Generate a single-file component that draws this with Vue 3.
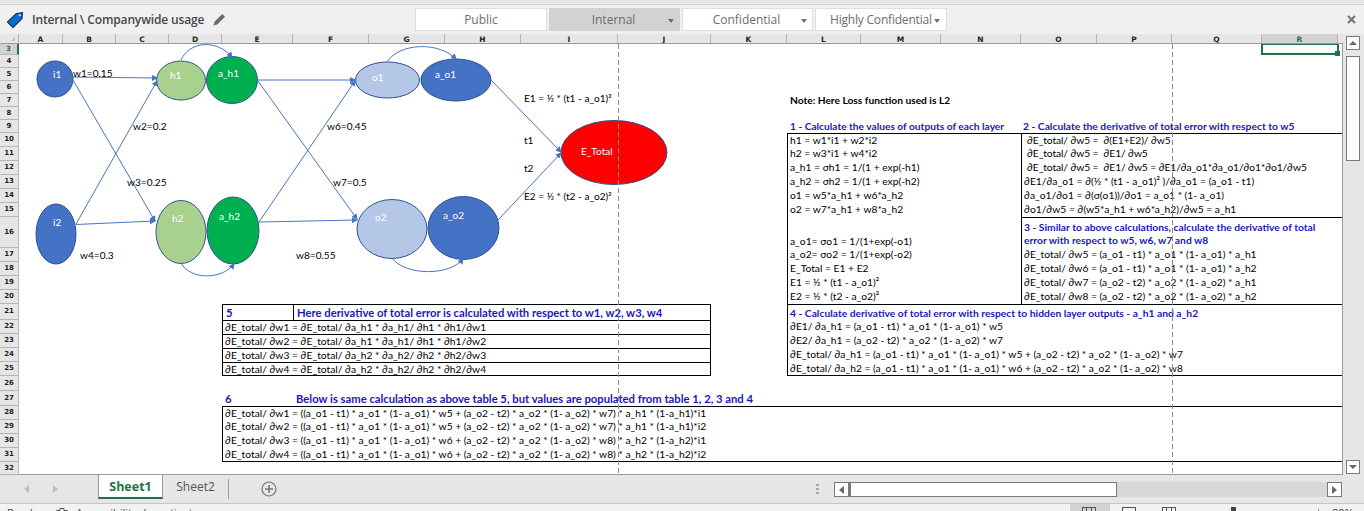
<script setup>
const colBounds = [19,63,116,169,222,293,369,445,521,618,711,787,861,941,1021,1097,1172,1262,1338,1342]
const colNames = 'ABCDEFGHIJKLMNOPQR'.split('')
const colWidths = colBounds.slice(1).map((b, i) => b - colBounds[i])
const rows = [
  [3,11],[4,13],[5,13],[6,13],[7,13],[8,13],[9,13],
  [10,14],[11,14],[12,14],[13,14],[14,14],[15,14],[16,31],[17,14],[18,14],[19,14],[20,14],
  [21,16],[22,14],[23,14],[24,14],[25,14],[26,15],[27,15],[28,14],[29,14],[30,14],[31,14],[32,13]
]
const sheetGrid = {
  gridTemplateColumns: colWidths.map(w => w + 'px').join(' '),
  gridTemplateRows: rows.map(r => r[1] + 'px').join(' ')
}
const colTemplate = { gridTemplateColumns: colWidths.map(w => w + 'px').join(' ') }

const t1a = ['h1 = w1*i1 + w2*i2','h2 = w3*i1 + w4*i2','a_h1 = σh1 = 1/(1 + exp(-h1)','a_h2 = σh2 = 1/(1 + exp(-h2)','o1 = w5*a_h1 + w6*a_h2','o2 = w7*a_h1 + w8*a_h2']
const t1b = ['a_o1= σo1 = 1/(1+exp(-o1)','a_o2= σo2 = 1/(1+exp(-o2)','E_Total = E1 + E2','E1 = ½ * (t1 - a_o1)²','E2 = ½ * (t2 - a_o2)²']
const t2a = ['∂E_total/ ∂w5 =  ∂(E1+E2)/ ∂w5','∂E_total/ ∂w5 =  ∂E1/ ∂w5','∂E_total/ ∂w5 =  ∂E1/ ∂w5 = ∂E1/∂a_o1*∂a_o1/∂o1*∂o1/∂w5']
const t2b = ['∂E1/∂a_o1 = ∂(½ * (t1 - a_o1)² )/∂a_o1 = (a_o1 - t1)','∂a_o1/∂o1 = ∂(σ(o1))/∂o1 = a_o1 * (1- a_o1)','∂o1/∂w5 = ∂(w5*a_h1 + w6*a_h2)/∂w5 = a_h1']
const t3 = ['∂E_total/ ∂w5 = (a_o1 - t1) * a_o1 * (1- a_o1) * a_h1','∂E_total/ ∂w6 = (a_o1 - t1) * a_o1 * (1- a_o1) * a_h2','∂E_total/ ∂w7 = (a_o2 - t2) * a_o2 * (1- a_o2) * a_h1','∂E_total/ ∂w8 = (a_o2 - t2) * a_o2 * (1- a_o2) * a_h2']
const t4 = ['∂E1/ ∂a_h1 = (a_o1 - t1) * a_o1 * (1- a_o1) * w5','∂E2/ ∂a_h1 = (a_o2 - t2) * a_o2 * (1- a_o2) * w7','∂E_total/ ∂a_h1 = (a_o1 - t1) * a_o1 * (1- a_o1) * w5 + (a_o2 - t2) * a_o2 * (1- a_o2) * w7','∂E_total/ ∂a_h2 = (a_o1 - t1) * a_o1 * (1- a_o1) * w6 + (a_o2 - t2) * a_o2 * (1- a_o2) * w8']
const t5 = ['∂E_total/ ∂w1 = ∂E_total/ ∂a_h1 * ∂a_h1/ ∂h1 * ∂h1/∂w1','∂E_total/ ∂w2 = ∂E_total/ ∂a_h1 * ∂a_h1/ ∂h1 * ∂h1/∂w2','∂E_total/ ∂w3 = ∂E_total/ ∂a_h2 * ∂a_h2/ ∂h2 * ∂h2/∂w3','∂E_total/ ∂w4 = ∂E_total/ ∂a_h2 * ∂a_h2/ ∂h2 * ∂h2/∂w4']
const t6 = ['∂E_total/ ∂w1 = ((a_o1 - t1) * a_o1 * (1- a_o1) * w5 + (a_o2 - t2) * a_o2 * (1- a_o2) * w7) * a_h1 * (1-a_h1)*i1','∂E_total/ ∂w2 = ((a_o1 - t1) * a_o1 * (1- a_o1) * w5 + (a_o2 - t2) * a_o2 * (1- a_o2) * w7) * a_h1 * (1-a_h1)*i2','∂E_total/ ∂w3 = ((a_o1 - t1) * a_o1 * (1- a_o1) * w6 + (a_o2 - t2) * a_o2 * (1- a_o2) * w8) * a_h2 * (1-a_h2)*i1','∂E_total/ ∂w4 = ((a_o1 - t1) * a_o1 * (1- a_o1) * w6 + (a_o2 - t2) * a_o2 * (1- a_o2) * w8) * a_h2 * (1-a_h2)*i2']

const ellipses = [
  { cx:55, cy:79, rx:18, ry:18, f:'#4472c4' },
  { cx:181, cy:80.5, rx:24.5, ry:19.5, f:'#a9d18e' },
  { cx:232, cy:80, rx:25.5, ry:23.5, f:'#00b050' },
  { cx:387.5, cy:80, rx:32, ry:18, f:'#b4c7e7' },
  { cx:456, cy:80, rx:35, ry:21, f:'#4472c4' },
  { cx:56, cy:234, rx:20, ry:30, f:'#4472c4' },
  { cx:181, cy:232, rx:25, ry:31.5, f:'#a9d18e' },
  { cx:233, cy:230.5, rx:26, ry:33.5, f:'#00b050' },
  { cx:392, cy:229, rx:35, ry:29.5, f:'#b4c7e7' },
  { cx:463.5, cy:228, rx:35.5, ry:31.5, f:'#4472c4' },
  { cx:614, cy:152.5, rx:53, ry:32, f:'#ff0000' }
]
const arrows = [
  'M73 77L157 78','M73 80L155 221','M76 224L157 81','M76 224.5L155 221',
  'M258 80L355 80','M258 81L357 219','M259 222L355 81','M259 222L357 220',
  'M491 80L561 152','M498 220L561 153'
]
const curves = [
  'M181 60C190 40 218 40 232 57','M387 62C400 42 440 42 456 59',
  'M181 263C190 280 222 280 234 264','M392 258C405 276 450 276 463 259'
]
const shapeLabels = [
  ['i1',53,78],['h1',170,79],['a_h1',218,77],['o1',372,81],['a_o1',435,78],
  ['i2',53,226],['h2',172,222],['a_h2',219,220],['o2',375,221],['a_o2',443,219],['E_Total',581,155]
]
const cellLabels = [
  ['w1=0.15',73,77],['w2=0.2',133,130],['w6=0.45',327,130],['w3=0.25',127,186],['w7=0.5',333,186],
  ['w4=0.3',80,259],['w8=0.55',296,259],['t1',524,144],['t2',524,172],
  ['E1 = ½ * (t1 - a_o1)²',524,102],['E2 = ½ * (t2 - a_o2)²',524,200]
]
</script>

<template>
  <div class="app">
    <div class="strip"></div>
    <div class="classbar">
      <svg class="tag" width="18" height="18" viewBox="0 0 18 18">
        <path d="M1.5 11L10.5 2.5L16.5 1.5L16 7.5L7 16.5Z" fill="#0a6ed1" stroke="#123a63" stroke-width="1.2" stroke-linejoin="round"/>
        <circle cx="13.7" cy="4.3" r="1" fill="#fff"/>
      </svg>
      <span class="title">Internal \ Companywide usage</span>
      <svg class="pencil" width="13" height="13" viewBox="0 0 13 13">
        <path d="M0.5 12.5L1.5 8.8L9.3 1L12 3.7L4.2 11.5Z" fill="#6a6a6a"/>
      </svg>
      <div class="levels">
        <div class="level public">Public</div>
        <div class="level active">Internal<i class="caret"></i></div>
        <div class="level">Confidential<i class="caret"></i></div>
        <div class="level last">Highly Confidential<i class="caret tight"></i></div>
      </div>
      <svg class="close" width="9" height="9" viewBox="0 0 9 9">
        <path d="M1 1L8 8M8 1L1 8" stroke="#777" stroke-width="2.2"/>
      </svg>
    </div>

    <div class="workbook">
      <div class="main">
        <div class="colhead">
          <div class="corner"><i></i></div>
          <div class="cols" :style="colTemplate">
            <div v-for="c in colNames" :key="c" class="col" :class="{ sel: c === 'R' }">{{ c }}</div>
          </div>
        </div>
        <div class="body">
          <div class="rowhead">
            <div v-for="r in rows" :key="r[0]" class="rowcell" :class="{ sel: r[0] === 3 }" :style="{ height: r[1] + 'px' }">{{ r[0] }}</div>
          </div>
          <div class="sheet" :style="sheetGrid">
            <div class="note">Note: Here Loss function used is L2</div>

            <div class="head h1">1 - Calculate the values of outputs of each layer</div>
            <div class="head h2">2 - Calculate the derivative of total error with respect to w5</div>

            <div class="tbl t1">
              <div v-for="l in t1a" :key="l" class="ln">{{ l }}</div>
              <div v-for="l in t1b" :key="l" class="ln">{{ l }}</div>
            </div>

            <div class="tbl t2">
              <div v-for="(l, i) in t2a" :key="i" class="ln ind">{{ l }}</div>
              <div v-for="l in t2b" :key="l" class="ln">{{ l }}</div>
            </div>

            <div class="tbl t3">
              <div class="head wrap">3 - Similar to above calculations, calculate the derivative of total<br>error with respect to w5, w6, w7 and w8</div>
              <div v-for="l in t3" :key="l" class="ln">{{ l }}</div>
            </div>

            <div class="tbl t4">
              <div class="head">4 - Calculate derivative of total error with respect to hidden layer outputs - a_h1 and a_h2</div>
              <div v-for="l in t4" :key="l" class="ln">{{ l }}</div>
            </div>

            <div class="tbl t5">
              <div class="t5head">
                <div class="head big num">5</div>
                <div class="head big">Here derivative of total error is calculated with respect to w1, w2, w3, w4</div>
              </div>
              <div v-for="l in t5" :key="l" class="ln ruled">{{ l }}</div>
            </div>

            <div class="head big t6n">6</div>
            <div class="head big t6h">Below is same calculation as above table 5, but values are populated from table 1, 2, 3 and 4</div>

            <div class="tbl t6">
              <div v-for="l in t6" :key="l" class="ln">{{ l }}</div>
            </div>

            <svg class="diagram" width="700" height="300" viewBox="0 0 700 300">
              <defs>
                <marker id="ah" markerWidth="6" markerHeight="6" refX="5" refY="3" orient="auto" markerUnits="userSpaceOnUse">
                  <path d="M0 0L6 3L0 6Z" fill="#4472c4"/>
                </marker>
              </defs>
              <ellipse v-for="(e, i) in ellipses" :key="i" :cx="e.cx" :cy="e.cy" :rx="e.rx" :ry="e.ry" :fill="e.f" stroke="#2f528f" stroke-width="1"/>
              <path v-for="(p, i) in arrows" :key="'a' + i" :d="p" fill="none" stroke="#4a75c4" stroke-width="1" marker-end="url(#ah)"/>
              <path v-for="(p, i) in curves" :key="'c' + i" :d="p" fill="none" stroke="#4a75c4" stroke-width="1" marker-end="url(#ah)"/>
              <text v-for="t in shapeLabels" :key="t[0]" :x="t[1]" :y="t[2]" class="shape-text">{{ t[0] }}</text>
              <text v-for="t in cellLabels" :key="t[0]" :x="t[1]" :y="t[2]" class="cell-text">{{ t[0] }}</text>
            </svg>

            <div class="cursor"><i></i></div>
            <div class="pagebreak one"></div>
            <div class="pagebreak two"></div>
          </div>
        </div>
      </div>
      <div class="vscroll">
        <div class="sbtn"><i class="up"></i></div>
        <div class="vtrack"><div class="vthumb"></div></div>
        <div class="sbtn"><i class="down"></i></div>
      </div>
    </div>

    <div class="tabbar">
      <div class="navs"><i class="nl"></i><i class="nr"></i></div>
      <div class="tab on">Sheet1</div>
      <div class="tab">Sheet2</div>
      <div class="tabsep"></div>
      <svg class="plus" width="16" height="16" viewBox="0 0 16 16">
        <circle cx="8" cy="8" r="7" fill="none" stroke="#777" stroke-width="1.2"/>
        <path d="M8 4V12M4 8H12" stroke="#777" stroke-width="1.6"/>
      </svg>
      <div class="dots"><i></i><i></i><i></i></div>
      <div class="hscroll">
        <div class="hbtn"><i class="nl dark"></i></div>
        <div class="hthumb"></div>
        <div class="hbtn end"><i class="nr dark"></i></div>
      </div>
    </div>

    <div class="status">
      <span class="ready">Ready</span>
      <svg class="acc" width="14" height="8" viewBox="0 0 14 8"><path d="M1.5 8V4.5H5V2.5H9V4.5H12.5V8" fill="none" stroke="#555"/></svg>
      <span class="acctext">Accessibility: Investigate</span>
      <div class="views">
        <div class="view on"><i></i></div>
        <div class="view"><i class="page"></i></div>
        <div class="view"><i></i></div>
      </div>
      <div class="slider"></div>
      <div class="tick"></div>
      <span class="pct">80%</span>
    </div>
  </div>
</template>

<style>
html, body { margin: 0; background: #fff; overflow: hidden; }
</style>

<style scoped>
* { box-sizing: border-box; }
.app { width: 1364px; height: 511px; overflow: hidden; display: flex; flex-direction: column; font-family: "Lato", "Liberation Sans", sans-serif; background: #e6e6e6; }
.strip { height: 5px; background: #e6e6e6; border-bottom: 1px solid #d0d0d0; flex: none; }
.classbar { height: 29px; flex: none; background: #f0f0f0; display: flex; align-items: center; padding-left: 6px; position: relative; }
.tag { flex: none; }
.title { margin-left: 8px; font: 600 12px "Open Sans", sans-serif; color: #44484e; letter-spacing: -0.15px; }
.pencil { margin-left: 9px; }
.levels { position: absolute; left: 415px; top: 3px; display: flex; gap: 2px; }
.level { width: 131px; height: 23px; background: #fff; border: 1px solid #dedede; font: 12px "Open Sans", sans-serif; color: #6d6d6d; display: flex; align-items: center; justify-content: center; position: relative; padding-right: 2px; }
.level.last { width: 132px; justify-content: flex-start; padding-left: 14px; letter-spacing: -0.2px; }
.level.public { width: 132px; padding-right: 0; }
.level.active { background: #d2d2d2; border-color: #d2d2d2; }
.caret { position: absolute; right: 5px; top: 10px; border: 3px solid transparent; border-top: 4px solid #707070; border-bottom: 0; }
.caret.tight { right: 6px; }
.close { position: absolute; left: 1347px; top: 10px; }

.workbook { flex: none; height: 441px; display: flex; }
.main { width: 1343px; flex: none; display: flex; flex-direction: column; }
.colhead { height: 10px; display: flex; flex: none; }
.corner { width: 19px; height: 10px; background: #e6e6e6; border-right: 1px solid #b5b5b5; border-bottom: 1px solid #9a9a9a; position: relative; }
.corner i { position: absolute; right: 3px; bottom: 2px; border-left: 4px solid transparent; border-bottom: 4px solid #c4c4c4; }
.cols { flex: 1; display: grid; border-bottom: 1px solid #9a9a9a; background: #e6e6e6; }
.col { height: 9px; font: bold 7.5px/11px "DejaVu Sans", sans-serif; color: #222; text-align: center; border-right: 1px solid #b5b5b5; overflow: hidden; }
.col.sel { background: #d2d2d2; color: #217346; }
.body { flex: 1; display: flex; min-height: 0; }
.rowhead { width: 19px; flex: none; background: #e6e6e6; }
.rowcell { font: bold 7px/1 "DejaVu Sans", sans-serif; color: #222; border-right: 1px solid #b5b5b5; border-bottom: 1px solid #b5b5b5; display: flex; align-items: center; justify-content: center; }
.rowcell.sel { background: #d2d2d2; color: #217346; border-right: 2px solid #217346; }
.sheet { flex: 1; display: grid; background: #fff; position: relative; font-size: 10.27px; color: #000; border-right: 1px solid #9a9a9a; border-bottom: 1px solid #9a9a9a; white-space: pre; }

.head { font-weight: 700; font-size: 10.3px; line-height: 14px; color: #1a18b8; }
.head.big { font-size: 11.25px; line-height: 15px; }
.note { grid-column: 12 / 16; grid-row: 5; align-self: end; font-weight: 700; padding-left: 3px; font-size: 10.2px; line-height: 14px; }
.h1 { grid-column: 12 / 15; grid-row: 7; padding-left: 3px; align-self: end; font-size: 10.2px; }
.h2 { grid-column: 15 / 20; grid-row: 7; padding-left: 2px; align-self: end; }

.tbl { display: grid; grid-template-rows: subgrid; border: 0 solid #000; min-width: 0; }
.ln { line-height: 13px; padding-left: 2px; overflow: hidden; }
.ind { padding-left: 5px; letter-spacing: -0.1px; }
.t1 { grid-column: 12 / 15; grid-row: 8 / 19; border-top-width: 1px; border-left-width: 1px; }
.t1 .ln:nth-child(7) { align-self: end; }
.t2 { grid-column: 15 / 20; grid-row: 8 / 14; border-top-width: 1px; border-left-width: 1px; }
.t3 { grid-column: 15 / 20; grid-row: 14 / 19; border-top-width: 1px; border-left-width: 1px; }
.t3 .head.wrap { line-height: 13px; padding: 3px 0 0 2px; }
.t4 { grid-column: 12 / 20; grid-row: 19 / 24; border-width: 1px 0 1px 1px; }
.t4 .head { padding-left: 2px; line-height: 16px; }
.t5 { grid-column: 5 / 11; grid-row: 19 / 24; border-width: 1px; }
.t5head { display: flex; }
.t5head .head { padding-left: 3px; line-height: 15px; }
.t5head .num { width: 71px; flex: none; border-right: 1px solid #000; }
.ruled { border-top: 1px solid #000; line-height: 13px; }
.t6n { grid-column: 5; grid-row: 25; padding-left: 3px; align-self: end; }
.t6h { grid-column: 6 / 14; grid-row: 25; padding-left: 3px; align-self: end; }
.t6 { grid-column: 5 / 20; grid-row: 26 / 30; border-width: 1px 0 1px 1px; }

.diagram { position: absolute; left: -19px; top: -44px; pointer-events: none; }
.shape-text { font: 10px "Lato", sans-serif; fill: #fff; }
.cell-text { font: 10.1px "Lato", sans-serif; fill: #000; }
.cursor { position: absolute; left: 1242px; top: 0; width: 78px; height: 11px; border: 2px solid #217346; border-top-width: 1px; }
.cursor i { position: absolute; right: -3px; bottom: -3px; width: 5px; height: 5px; background: #217346; border: 0; }
.pagebreak { position: absolute; top: 0; bottom: 0; width: 1px; background: repeating-linear-gradient(to bottom, #8c8c8c 0 5px, transparent 5px 8px); }
.one { left: 599px; }
.two { left: 1153px; }

.vscroll { width: 21px; flex: none; background: #e6e6e6; padding: 2px 4px 1px 3px; display: flex; flex-direction: column; justify-content: space-between; }
.sbtn { height: 14px; background: #fff; border: 1px solid #7a7a7a; display: flex; align-items: center; justify-content: center; flex: none; }
.sbtn .up { border: 4px solid transparent; border-top: 0; border-bottom: 4px solid #666; }
.sbtn .down { border: 4px solid transparent; border-bottom: 0; border-top: 4px solid #666; }
.vtrack { flex: 1; padding-top: 6px; }
.vthumb { height: 105px; background: #fff; border: 1px solid #7a7a7a; }

.tabbar { height: 28px; flex: none; background: #e6e6e6; position: relative; display: flex; align-items: flex-start; padding-left: 98px; }
.navs { position: absolute; left: 24px; top: 10px; width: 34px; display: flex; justify-content: space-between; }
.nl { display: block; border: 4px solid transparent; border-left: 0; border-right: 5px solid #bdbdbd; }
.nr { display: block; border: 4px solid transparent; border-right: 0; border-left: 5px solid #bdbdbd; }
.nl.dark { border-right-color: #666; }
.nr.dark { border-left-color: #666; }
.tab { width: 65px; height: 24px; font: 12px/24px "Open Sans", sans-serif; color: #555; text-align: center; }
.tab.on { background: #fff; color: #217346; font-weight: 700; font-size: 12.5px; border-left: 1px solid #9a9a9a; border-right: 1px solid #9a9a9a; border-bottom: 2px solid #217346; }
.tabsep { width: 1px; height: 20px; background: #9a9a9a; margin-top: 4px; }
.plus { position: absolute; left: 261px; top: 6px; }
.dots { position: absolute; left: 816px; top: 9px; display: flex; flex-direction: column; gap: 2px; }
.dots i { width: 3px; height: 2px; background: #a8a8a8; }
.hscroll { position: absolute; left: 834px; top: 7px; width: 508px; height: 15px; background: #d8d8d8; display: flex; }
.hbtn { width: 15px; background: #fff; border: 1px solid #7a7a7a; display: flex; align-items: center; justify-content: center; flex: none; }
.hbtn.end { margin-left: auto; }
.hthumb { width: 268px; background: #fff; border: 1px solid #7a7a7a; border-left-width: 2px; }

.status { height: 8px; flex: none; background: #f2f2f2; border-top: 1px solid #c6c6c6; position: relative; font: 11px/18px "Open Sans", sans-serif; color: #444; overflow: hidden; }
.ready { position: absolute; left: 7px; top: 0; }
.acc { position: absolute; left: 55px; top: 2px; }
.acctext { position: absolute; left: 76px; top: 0; }
.views { position: absolute; left: 1070px; top: 0; display: flex; }
.view { width: 40px; height: 7px; position: relative; }
.view.on { background: #d2d2d2; }
.view i { position: absolute; left: 12px; top: 3px; width: 14px; height: 10px; border: 1px solid #555; background: linear-gradient(to right, transparent 3px, #555 3px 4px, transparent 4px 8px, #555 8px 9px, transparent 9px); }
.view i.page { background: #fff; box-shadow: inset 0 0 0 2px #f2f2f2; }
.slider { position: absolute; left: 1231px; top: 3px; width: 5px; height: 5px; background: #444; }
.tick { position: absolute; left: 1318px; top: 5px; width: 1px; height: 3px; background: #888; }
.pct { position: absolute; left: 1332px; top: 0; }
</style>
